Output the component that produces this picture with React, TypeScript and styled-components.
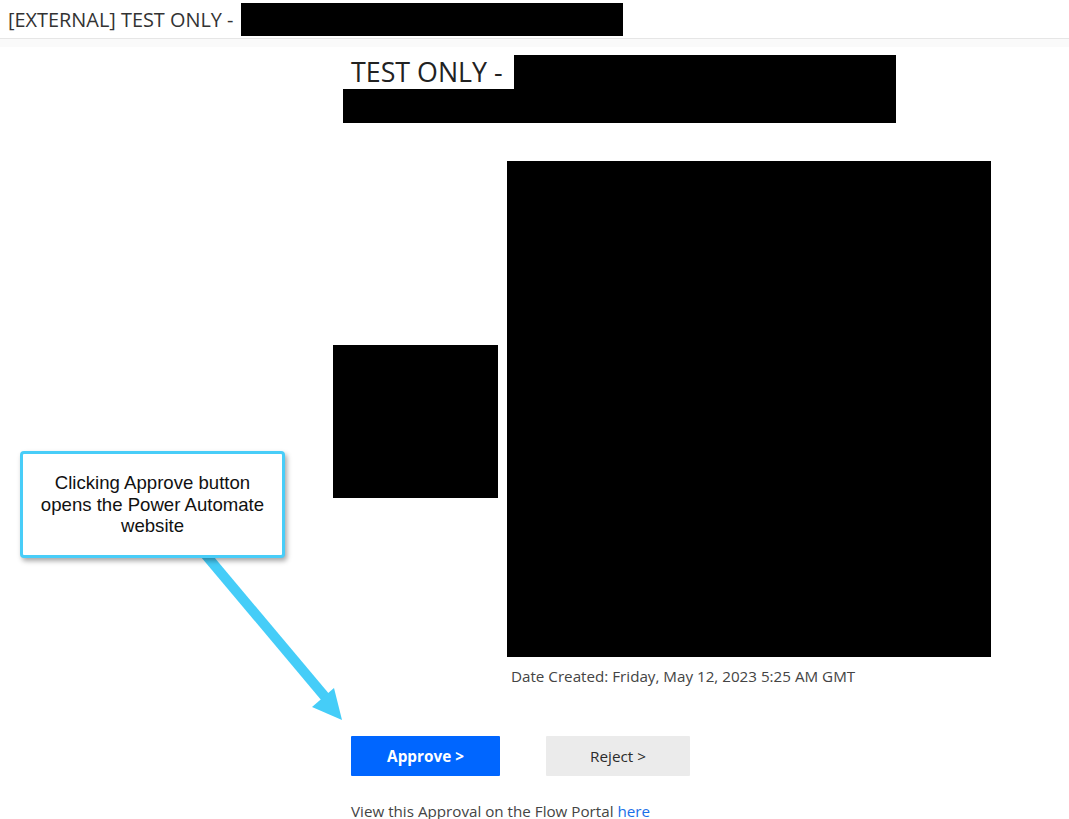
import { FC } from 'react';
import styled, { createGlobalStyle } from 'styled-components';

const GlobalStyle = createGlobalStyle`
  html, body {
    margin: 0;
    padding: 0;
    background: #ffffff;
  }
  body {
    font-family: "Open Sans", "Noto Sans", sans-serif;
    color: #333333;
  }
`;

const Page = styled.div`
  position: relative;
  width: 1069px;
  height: 819px;
  overflow: hidden;
`;

const Header = styled.header`
  display: flex;
  align-items: center;
  gap: 7px;
  height: 38px;
  padding: 0 0 0 8px;
  border-bottom: 1px solid #e6e6e6;
`;

const Subject = styled.span`
  font-size: 19.9px;
  color: #333333;
  white-space: nowrap;
`;

type RedactProps = {
  w?: number;
  h: number;
};

const Redact = styled.div<RedactProps>`
  background: #000000;
  height: ${(p) => p.h}px;
  width: ${(p) => (p.w ? `${p.w}px` : 'auto')};
  flex: ${(p) => (p.w ? '0 0 auto' : '1 1 auto')};
`;

const Band = styled.div`
  height: 8px;
  background: #fafafa;
`;

const Body = styled.main`
  display: flex;
  flex-direction: column;
  padding: 8px 0 0 333px;
`;

const TitleBlock = styled.div`
  display: flex;
  flex-direction: column;
  width: 553px;
  margin-left: 10px;
`;

const TitleRow = styled.div`
  display: flex;
`;

const TitleText = styled.h1`
  margin: 0;
  flex: 0 0 171px;
  height: 34px;
  padding-left: 8px;
  box-sizing: border-box;
  font-size: 26.8px;
  font-weight: 400;
  line-height: 34px;
  color: #222222;
  white-space: nowrap;
`;

const Media = styled.div`
  display: flex;
  align-items: flex-start;
  gap: 9px;
  margin-top: 38px;
`;

const Side = styled.div`
  display: flex;
  flex-direction: column;
`;

const Thumb = styled(Redact)`
  margin-top: 184px;
`;

const DateLine = styled.p`
  margin: 9px 0 0 4px;
  font-size: 15.2px;
  color: #444444;
  white-space: nowrap;
`;

const Actions = styled.div`
  display: flex;
  gap: 46px;
  margin: 50px 0 0 18px;
`;

type BtnProps = {
  primary?: boolean;
  w: number;
};

const Button = styled.button<BtnProps>`
  width: ${(p) => p.w}px;
  height: 40px;
  border: none;
  border-radius: 1px;
  font-family: inherit;
  font-size: 15.3px;
  font-weight: ${(p) => (p.primary ? 700 : 500)};
  color: ${(p) => (p.primary ? '#ffffff' : '#2b2b2b')};
  background: ${(p) => (p.primary ? '#0066ff' : '#ebebeb')};
  cursor: pointer;
`;

const PortalLine = styled.p`
  margin: 25px 0 0 18px;
  font-size: 15.2px;
  color: #444444;
  white-space: nowrap;
`;

const Link = styled.a`
  color: #1a6fe8;
  text-decoration: none;
`;

const Callout = styled.div`
  position: absolute;
  left: 20px;
  top: 451px;
  width: 265px;
  height: 107px;
  box-sizing: border-box;
  border: 3px solid #48cdf8;
  border-radius: 4px;
  background: #ffffff;
  box-shadow: 2px 3px 5px rgba(0, 0, 0, 0.35);
  display: flex;
  align-items: center;
  justify-content: center;
  padding: 0 8px;
  font-family: "Liberation Sans", Arial, sans-serif;
  font-size: 18.6px;
  line-height: 21.5px;
  text-align: center;
  color: #111111;
  z-index: 3;
`;

const Pointer = styled.svg`
  position: absolute;
  left: 180px;
  top: 540px;
  z-index: 2;
`;

const App: FC = () => {
  return (
    <Page>
      <GlobalStyle />
      <Header>
        <Subject>[EXTERNAL] TEST ONLY -</Subject>
        <Redact w={382} h={33} />
      </Header>
      <Band />
      <Body>
        <TitleBlock>
          <TitleRow>
            <TitleText>TEST ONLY -</TitleText>
            <Redact h={34} />
          </TitleRow>
          <Redact h={34} />
        </TitleBlock>
        <Media>
          <Thumb w={165} h={153} />
          <Side>
            <Redact w={484} h={496} />
            <DateLine>Date Created: Friday, May 12, 2023 5:25 AM GMT</DateLine>
          </Side>
        </Media>
        <Actions>
          <Button primary w={149}>Approve &gt;</Button>
          <Button w={144}>Reject &gt;</Button>
        </Actions>
        <PortalLine>
          View this Approval on the Flow Portal <Link href="#">here</Link>
        </PortalLine>
      </Body>
      <Callout>
        Clicking Approve button opens the Power Automate website
      </Callout>
      <Pointer width="180" height="190" viewBox="0 0 180 190">
        <line x1="25" y1="14" x2="146" y2="158" stroke="#45cdf8" strokeWidth="10" />
        <polygon points="132,167 154,148 162,180" fill="#45cdf8" />
      </Pointer>
    </Page>
  );
};

export default App;
